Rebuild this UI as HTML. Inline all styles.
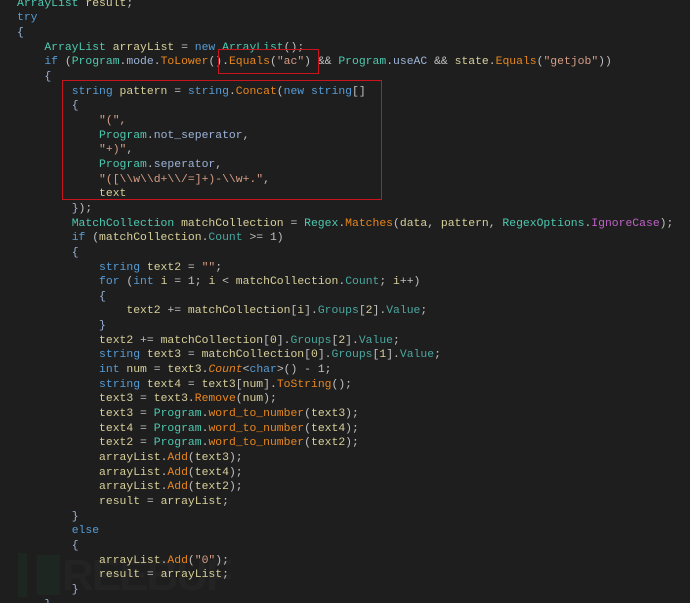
<!DOCTYPE html>
<html><head><meta charset="utf-8"><style>
html,body{margin:0;padding:0;background:#1e1e1e;width:690px;height:603px;overflow:hidden;position:relative}
pre{position:absolute;left:17px;top:-3.3px;margin:0;font-family:"Liberation Mono",monospace;font-size:11.4px;line-height:14.65px;color:#c0c0c0}
.k{color:#569cd6}.t{color:#4ec9b0}.m{color:#e8861f}.v{color:#d8d09a}.s{color:#d69d85}.f{color:#4aa8a0}.pu{color:#bd63c5}.b{color:#9cb4d8}
.box{position:absolute;border:1px solid #c8141c}
</style></head><body>
<div style="position:absolute;left:18px;top:553px;width:9px;height:44px;background:#1d2620"></div>
<div style="position:absolute;left:37px;top:555px;width:23px;height:40px;background:#1d2620"></div>
<div style="position:absolute;left:62px;top:555px;font:bold 44px 'Liberation Sans',sans-serif;color:#232323;line-height:42px;letter-spacing:-2px">REEBUF</div>
<pre><span class="t">ArrayList</span> <span class="v">result</span>;
<span class="k">try</span>
<span class="b">{</span>
    <span class="t">ArrayList</span> <span class="v">arrayList</span> = <span class="k">new</span> <span class="t">ArrayList</span>();
    <span class="k">if</span> (<span class="t">Program</span>.<span class="b">mode</span>.<span class="m">ToLower</span>().<span class="m">Equals</span>(<span class="s">"ac"</span>) &amp;&amp; <span class="t">Program</span>.<span class="b">useAC</span> &amp;&amp; <span class="v">state</span>.<span class="m">Equals</span>(<span class="s">"getjob"</span>))
    <span class="b">{</span>
        <span class="k">string</span> <span class="v">pattern</span> = <span class="k">string</span>.<span class="m">Concat</span>(<span class="k">new</span> <span class="k">string</span>[]
        <span class="b">{</span>
            <span class="s">"(",</span>
            <span class="t">Program</span>.<span class="b">not_seperator</span>,
            <span class="s">"+)"</span>,
            <span class="t">Program</span>.<span class="b">seperator</span>,
            <span class="s">"([\\w\\d+\\/=]+)-\\w+."</span>,
            <span class="v">text</span>
        <span class="b">}</span>);
        <span class="t">MatchCollection</span> <span class="v">matchCollection</span> = <span class="t">Regex</span>.<span class="m">Matches</span>(<span class="v">data</span>, <span class="v">pattern</span>, <span class="t">RegexOptions</span>.<span class="pu">IgnoreCase</span>);
        <span class="k">if</span> (<span class="v">matchCollection</span>.<span class="f">Count</span> &gt;= 1)
        <span class="b">{</span>
            <span class="k">string</span> <span class="v">text2</span> = <span class="s">""</span>;
            <span class="k">for</span> (<span class="k">int</span> <span class="v">i</span> = 1; <span class="v">i</span> &lt; <span class="v">matchCollection</span>.<span class="f">Count</span>; <span class="v">i</span>++)
            <span class="b">{</span>
                <span class="v">text2</span> += <span class="v">matchCollection</span>[<span class="v">i</span>].<span class="f">Groups</span>[<span class="v">2</span>].<span class="f">Value</span>;
            <span class="b">}</span>
            <span class="v">text2</span> += <span class="v">matchCollection</span>[<span class="v">0</span>].<span class="f">Groups</span>[<span class="v">2</span>].<span class="f">Value</span>;
            <span class="k">string</span> <span class="v">text3</span> = <span class="v">matchCollection</span>[<span class="v">0</span>].<span class="f">Groups</span>[<span class="v">1</span>].<span class="f">Value</span>;
            <span class="k">int</span> <span class="v">num</span> = <span class="v">text3</span>.<span class="m" style="font-style:italic">Count</span>&lt;<span class="k">char</span>&gt;() - 1;
            <span class="k">string</span> <span class="v">text4</span> = <span class="v">text3</span>[<span class="v">num</span>].<span class="m">ToString</span>();
            <span class="v">text3</span> = <span class="v">text3</span>.<span class="m">Remove</span>(<span class="v">num</span>);
            <span class="v">text3</span> = <span class="t">Program</span>.<span class="m">word_to_number</span>(<span class="v">text3</span>);
            <span class="v">text4</span> = <span class="t">Program</span>.<span class="m">word_to_number</span>(<span class="v">text4</span>);
            <span class="v">text2</span> = <span class="t">Program</span>.<span class="m">word_to_number</span>(<span class="v">text2</span>);
            <span class="v">arrayList</span>.<span class="m">Add</span>(<span class="v">text3</span>);
            <span class="v">arrayList</span>.<span class="m">Add</span>(<span class="v">text4</span>);
            <span class="v">arrayList</span>.<span class="m">Add</span>(<span class="v">text2</span>);
            <span class="v">result</span> = <span class="v">arrayList</span>;
        <span class="b">}</span>
        <span class="k">else</span>
        <span class="b">{</span>
            <span class="v">arrayList</span>.<span class="m">Add</span>(<span class="s">"0"</span>);
            <span class="v">result</span> = <span class="v">arrayList</span>;
        <span class="b">}</span>
    <span class="b">}</span></pre>
<div class="box" style="left:218px;top:49px;width:99px;height:23px"></div>
<div class="box" style="left:62px;top:80px;width:318px;height:118px"></div>
</body></html>
